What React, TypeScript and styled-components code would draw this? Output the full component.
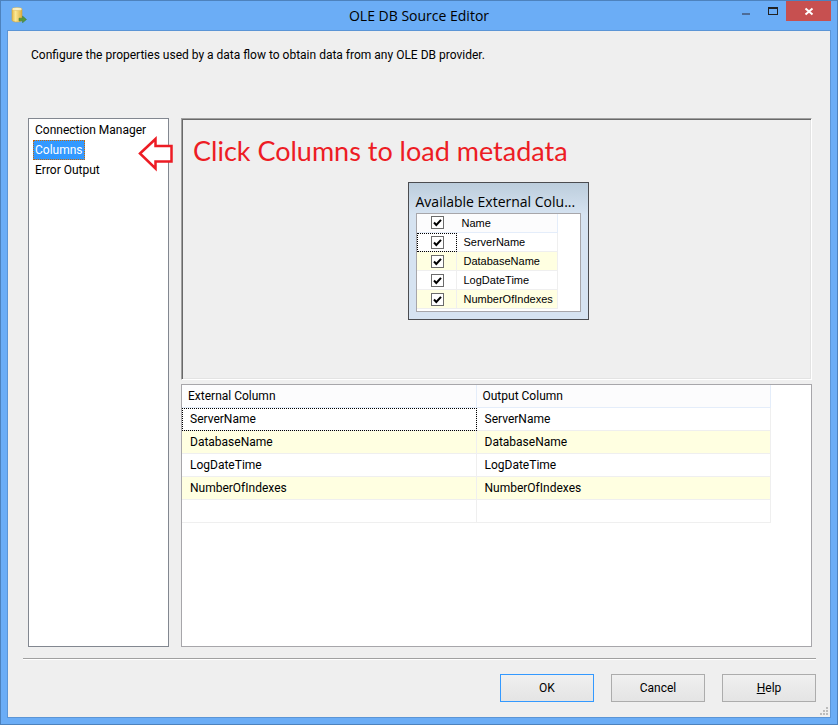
import React, { useState } from "react";
import styled, { createGlobalStyle, css } from "styled-components";

const GlobalStyle = createGlobalStyle`
  *, *::before, *::after { box-sizing: border-box; }
  html, body { margin: 0; padding: 0; }
  body, button, input, table {
    font-family: Roboto, "Open Sans", sans-serif;
    font-size: 12px;
    line-height: 16px;
    color: #000;
  }
`;

const Window = styled.div`
  display: flex;
  flex-direction: column;
  min-height: 100vh;
  padding: 0 6px 6px;
  border: 1px solid #4d82bd;
  background: #6badf6;
`;

const TitleBar = styled.header`
  display: grid;
  grid-template-columns: 1fr auto 1fr;
  height: 29px;
`;

const AppIcon = styled.svg`
  width: 16px;
  height: 16px;
  margin: 6px 0 0 4px;
`;

const WindowTitle = styled.h1`
  margin: 0;
  font-family: "Open Sans", "Noto Sans", sans-serif;
  font-size: 14px;
  font-weight: 400;
  line-height: 30px;
`;

const WindowButtons = styled.div`
  display: flex;
  justify-content: flex-end;
`;

const WindowButton = styled.button<{ $close?: boolean }>`
  width: ${(p) => (p.$close ? 45 : 27)}px;
  height: 20px;
  padding: 0;
  border: 0;
  background: ${(p) => (p.$close ? "#c75050" : "transparent")};
  svg { display: block; width: 100%; height: 20px; }
`;

const Client = styled.main`
  position: relative;
  flex: 1;
  display: flex;
  flex-direction: column;
  border: 1px solid #5b95d6;
  background: #efefef;
`;

const Description = styled.p`
  margin: 16px 23px 55px;
`;

const Body = styled.div`
  flex: 1;
  display: grid;
  grid-template-columns: 141px minmax(0, 1fr);
  gap: 12px;
  margin: 0 18px 0 20px;
`;

const Sidebar = styled.nav`
  position: relative;
  padding: 1px 4px;
  border: 1px solid #828790;
  background: #fff;
`;

const PageList = styled.ul`
  display: flex;
  flex-direction: column;
  align-items: flex-start;
  margin: 0;
  padding: 0;
  list-style: none;
`;

const PageButton = styled.button<{ $selected: boolean }>`
  display: block;
  height: 20px;
  padding: 0 1px;
  border: 1px solid transparent;
  background: transparent;
  line-height: 18px;
  white-space: nowrap;
  ${(p) =>
    p.$selected &&
    css`
      border: 1px dotted #cc6600;
      background: #3399ff;
      color: #fff;
    `}
`;

const Arrow = styled.svg`
  position: absolute;
  top: 17px;
  left: 109px;
  width: 37px;
  height: 36px;
  pointer-events: none;
`;

const Panels = styled.div`
  display: flex;
  flex-direction: column;
  gap: 4px;
  min-width: 0;
`;

const Diagram = styled.section`
  display: flex;
  flex-direction: column;
  align-items: center;
  min-height: 262px;
  padding: 10px 8px 10px 11px;
  border: 1px solid;
  border-color: #a0a0a0 #fff #fff #a0a0a0;
  box-shadow: inset 1px 1px #696969, inset -1px -1px #e3e3e3;
`;

const Note = styled.p`
  align-self: flex-start;
  margin: 0 0 9px;
  font-family: Lato, "Open Sans", sans-serif;
  font-size: 27px;
  line-height: 44px;
  color: #ed1c24;
`;

const Node = styled.div`
  width: 181px;
  padding: 0 7px 7px;
  border: 1px solid #4b4c50;
  background: linear-gradient(#bccddc, #d6e3f1 32px);
`;

const NodeTitle = styled.h2`
  height: 30px;
  margin: 0;
  padding-top: 4px;
  font-family: "Open Sans", "Noto Sans", sans-serif;
  font-size: 14px;
  font-weight: 400;
  line-height: 30px;
  white-space: nowrap;
`;

const NodeGrid = styled.div`
  height: 99px;
  border: 1px solid #a7a6aa;
  background: #fff;
`;

const NodeTable = styled.table`
  width: 141px;
  border-collapse: separate;
  border-spacing: 0;
  table-layout: fixed;
  font-family: "Liberation Sans", Arial, sans-serif;
  font-size: 11px;
  line-height: 14px;
`;

const NodeHead = styled.th<{ $check?: boolean }>`
  width: ${(p) => (p.$check ? "40px" : "auto")};
  height: 19px;
  padding: ${(p) => (p.$check ? "0 0 2px 1px" : "0 0 1px 5px")};
  border-right: ${(p) => (p.$check ? "0" : "1px solid #e4edfa")};
  border-bottom: 1px solid #e4edfa;
  background: #fcfcfd;
  font-weight: 400;
  text-align: left;
`;

const NodeCell = styled.td<{ $check?: boolean; $shade?: boolean; $focus?: boolean }>`
  height: 19px;
  padding: ${(p) => (p.$check ? "0 0 0 2px" : "0 0 0 7px")};
  border-right: 1px solid #efefef;
  border-bottom: 1px solid #efefef;
  background: ${(p) => (p.$shade ? "#ffffe1" : "#fff")};
  ${(p) => p.$focus && css`outline: 1px dotted #000; outline-offset: -1px;`}
`;

const CheckBox = styled.input`
  appearance: none;
  display: block;
  width: 13px;
  height: 13px;
  margin: 0 auto;
  border: 1px solid #6b6b6b;
  background: #fff;
  &:checked {
    background: #fff url("data:image/svg+xml,%3Csvg xmlns='http://www.w3.org/2000/svg' viewBox='0 0 11 11'%3E%3Cpath d='M2 5.5 4.3 8 9 2.8' fill='none' stroke='black' stroke-width='2'/%3E%3C/svg%3E") center / 11px 11px no-repeat;
  }
`;

const Mapping = styled.section`
  flex: 1;
  min-height: 140px;
  border: 1px solid #a7a6aa;
  background: #fff;
`;

const MappingTable = styled.table`
  width: 589px;
  max-width: 100%;
  border-collapse: separate;
  border-spacing: 0;
  table-layout: fixed;
`;

const MappingHead = styled.th`
  height: 23px;
  padding: 0 6px;
  border-right: 1px solid #e4edfa;
  border-bottom: 1px solid #e4edfa;
  background: #fcfcfd;
  font-weight: 400;
  text-align: left;
`;

const MappingCell = styled.td<{ $shade?: boolean; $focus?: boolean }>`
  height: 23px;
  padding: 0 8px;
  border-right: 1px solid #efefef;
  border-bottom: 1px solid #efefef;
  background: ${(p) => (p.$shade ? "#ffffe1" : "#fff")};
  ${(p) => p.$focus && css`outline: 1px dotted #000; outline-offset: -1px;`}
`;

const Footer = styled.footer`
  display: flex;
  justify-content: flex-end;
  gap: 17px;
  margin: 11px 14px 0 15px;
  padding: 15px 0;
  border-top: 1px solid #a0a0a0;
  box-shadow: inset 0 1px #fff;
`;

const DialogButton = styled.button<{ $primary?: boolean }>`
  width: 94px;
  height: 28px;
  padding: 0;
  border: 1px solid ${(p) => (p.$primary ? "#3399ff" : "#acacac")};
  background: linear-gradient(#f0f0f0, #e4e4e4);
`;

const Grip = styled.svg`
  position: absolute;
  right: 2px;
  bottom: 2px;
  width: 8px;
  height: 8px;
`;

const pages = ["Connection Manager", "Columns", "Error Output"];
const columns = ["ServerName", "DatabaseName", "LogDateTime", "NumberOfIndexes"];

export default function App() {
  const [page, setPage] = useState("Columns");

  return (
    <>
      <GlobalStyle />
      <Window>
        <TitleBar>
          <AppIcon viewBox="0 0 16 16" aria-hidden="true">
            <defs>
              <linearGradient id="drum">
                <stop offset="0" stopColor="#e3b94a" />
                <stop offset="0.35" stopColor="#fbe894" />
                <stop offset="1" stopColor="#dcae3e" />
              </linearGradient>
            </defs>
            <path d="M1 2v11.200c0 2.400 10 2.400 10 0V2z" fill="url(#drum)" stroke="#cfa544" strokeWidth="0.600" />
            <ellipse cx="6" cy="2" rx="5" ry="1.600" fill="#fbf1c4" stroke="#dab652" strokeWidth="0.500" />
            <path d="M8 11.200h3.500V9l4 3.500-4 3.300v-2H8z" fill="#55983c" stroke="#3d7a38" strokeWidth="0.500" />
          </AppIcon>
          <WindowTitle>OLE DB Source Editor</WindowTitle>
          <WindowButtons>
            <WindowButton aria-label="Minimize">
              <svg viewBox="0 0 27 20"><path d="M10 12h8v2h-8z" fill="#4d6c98" /></svg>
            </WindowButton>
            <WindowButton aria-label="Maximize">
              <svg viewBox="0 0 27 20"><path d="M9 6h10v8H9zM10 8v5h8V8z" fill="#222" fillRule="evenodd" /></svg>
            </WindowButton>
            <WindowButton $close aria-label="Close">
              <svg viewBox="0 0 45 20"><path d="M19.500 7.500l7 6M26.500 7.500l-7 6" stroke="#fff" strokeWidth="2" /></svg>
            </WindowButton>
          </WindowButtons>
        </TitleBar>
        <Client>
          <Description>
            Configure the properties used by a data flow to obtain data from any OLE DB provider.
          </Description>
          <Body>
            <Sidebar aria-label="Pages">
              <PageList>
                {pages.map((name) => (
                  <li key={name}>
                    <PageButton $selected={name === page} onClick={() => setPage(name)}>
                      {name}
                    </PageButton>
                  </li>
                ))}
              </PageList>
              <Arrow viewBox="0 0 37 36" aria-hidden="true">
                <path
                  d="M2 17.500 17.500 3V10H33.500V25.500H17.500V32.500Z"
                  fill="#fff"
                  stroke="#ed1c24"
                  strokeWidth="2.500"
                />
              </Arrow>
            </Sidebar>
            <Panels>
              <Diagram>
                <Note>Click Columns to load metadata</Note>
                <Node>
                  <NodeTitle>Available External Colu...</NodeTitle>
                  <NodeGrid>
                    <NodeTable>
                      <thead>
                        <tr>
                          <NodeHead $check>
                            <CheckBox type="checkbox" defaultChecked aria-label="Select all" />
                          </NodeHead>
                          <NodeHead>Name</NodeHead>
                        </tr>
                      </thead>
                      <tbody>
                        {columns.map((name, i) => (
                          <tr key={name}>
                            <NodeCell $check $shade={i % 2 === 1} $focus={i === 0}>
                              <CheckBox type="checkbox" defaultChecked aria-label={name} />
                            </NodeCell>
                            <NodeCell $shade={i % 2 === 1}>{name}</NodeCell>
                          </tr>
                        ))}
                      </tbody>
                    </NodeTable>
                  </NodeGrid>
                </Node>
              </Diagram>
              <Mapping>
                <MappingTable>
                  <thead>
                    <tr>
                      <MappingHead>External Column</MappingHead>
                      <MappingHead>Output Column</MappingHead>
                    </tr>
                  </thead>
                  <tbody>
                    {columns.map((name, i) => (
                      <tr key={name}>
                        <MappingCell $shade={i % 2 === 1} $focus={i === 0}>{name}</MappingCell>
                        <MappingCell $shade={i % 2 === 1}>{name}</MappingCell>
                      </tr>
                    ))}
                    <tr>
                      <MappingCell />
                      <MappingCell />
                    </tr>
                  </tbody>
                </MappingTable>
              </Mapping>
            </Panels>
          </Body>
          <Footer>
            <DialogButton $primary>OK</DialogButton>
            <DialogButton>Cancel</DialogButton>
            <DialogButton><u>H</u>elp</DialogButton>
          </Footer>
          <Grip viewBox="0 0 8 8" aria-hidden="true">
            <path d="M6 0h2v2H6zM3 3h2v2H3zM6 3h2v2H6zM0 6h2v2H0zM3 6h2v2H3zM6 6h2v2H6z" fill="#bcbcbc" />
          </Grip>
        </Client>
      </Window>
    </>
  );
}
